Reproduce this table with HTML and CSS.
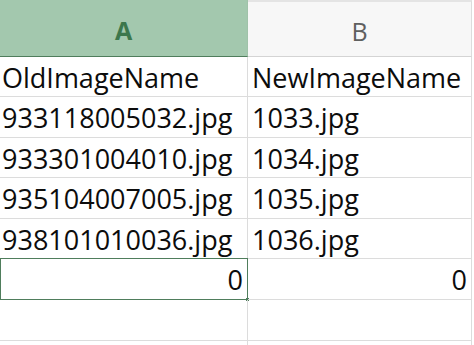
FILE: index.html
```html
<!DOCTYPE html>
<html lang="en">
<head>
<meta charset="utf-8">
<title>Image rename sheet</title>
<link rel="stylesheet" href="styles.css">
</head>
<body>
<div class="sheet">
  <div class="col-head col-head--active">A</div>
  <div class="col-head">B</div>

  <div class="cell">OldImageName</div>
  <div class="cell cell--b">NewImageName</div>

  <div class="cell">933118005032.jpg</div>
  <div class="cell cell--b">1033.jpg</div>

  <div class="cell">933301004010.jpg</div>
  <div class="cell cell--b">1034.jpg</div>

  <div class="cell">935104007005.jpg</div>
  <div class="cell cell--b">1035.jpg</div>

  <div class="cell">938101010036.jpg</div>
  <div class="cell cell--b">1036.jpg</div>

  <div class="cell cell--num cell--selected">0</div>
  <div class="cell cell--b cell--num">0</div>

  <div class="cell"></div>
  <div class="cell cell--b"></div>

  <div class="cell cell--open"></div>
  <div class="cell cell--b cell--open"></div>
</div>
</body>
</html>
```

FILE: styles.css
```css
html, body {
  margin: 0;
  padding: 0;
  background: #ffffff;
}

body {
  width: 474px;
  height: 345px;
  overflow: hidden;
  font-family: "Open Sans", "Noto Sans", sans-serif;
  color: #0c0c0c;
}

.sheet {
  display: grid;
  grid-template-columns: 248px 224px;
  grid-template-rows: 57px 40px 41px 40px 41px 40px 41px 41px 4px;
}

.col-head {
  box-sizing: border-box;
  display: flex;
  align-items: center;
  justify-content: center;
  padding-top: 3px;
  background: #f7f7f7;
  border-top: 2px solid #e4e4e4;
  border-right: 1px solid #dcdcdc;
  border-bottom: 1px solid #d4d4d4;
  font-size: 25px;
  color: #5f5f5f;
}

.col-head--active {
  background: #a3c8ae;
  border-top: none;
  border-right: 1px solid #9fc2a9;
  border-bottom: 1px solid #4f7d5c;
  color: #3c774c;
  font-weight: 700;
}

.cell {
  box-sizing: border-box;
  position: relative;
  display: flex;
  align-items: center;
  padding: 1px 4px 0 2px;
  border-right: 1px solid #dcdcdc;
  border-bottom: 1px solid #dcdcdc;
  font-size: 27px;
  white-space: nowrap;
  overflow: hidden;
}

.cell--b {
  padding-left: 4px;
}

.cell--num {
  justify-content: flex-end;
}

.cell--open {
  border-bottom: none;
}

/* active cell frame with the fill handle at its corner */
.cell--selected {
  overflow: visible;
}

.cell--selected::before {
  content: "";
  position: absolute;
  left: 0;
  top: -1px;
  right: -1px;
  bottom: -1px;
  border: 1px solid #4f7d5c;
  pointer-events: none;
}

.cell--selected::after {
  content: "";
  position: absolute;
  right: -2px;
  bottom: -2px;
  width: 3px;
  height: 3px;
  background: #4f7d5c;
}
```
